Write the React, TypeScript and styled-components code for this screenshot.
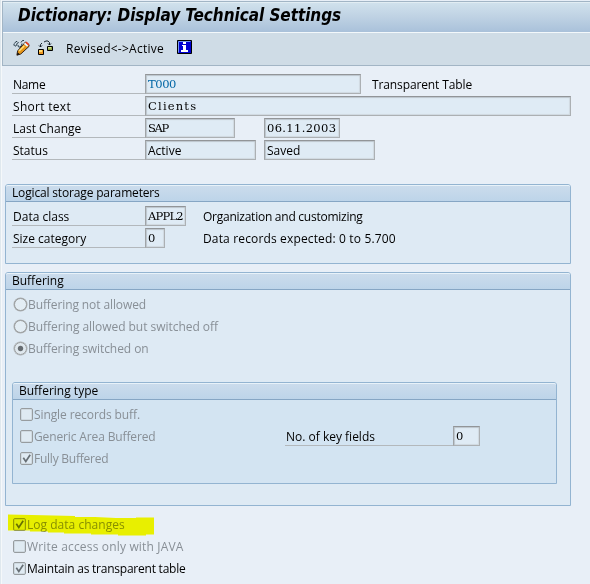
import React from 'react';
import styled, { createGlobalStyle } from 'styled-components';

const Global = createGlobalStyle`
  * { box-sizing: border-box; }
  body { margin: 0; background: #e8eff7; overflow: hidden; }
`;

const Page = styled.div`
  position: relative;
  width: 590px;
  height: 584px;
  padding: 1px 0 0 2px;
  background: #e8eff7;
  color: #000;
  font: 12px/20px "Open Sans", sans-serif;
  white-space: nowrap;
  box-shadow: inset 1px 0 #dfe8ee, inset 2px 0 #f5f8fa;
`;

const Header = styled.header`
  height: 65px;
  border: solid #a2b5c5;
  border-width: 1px 0 1px 1px;
  background: #cfdce6;
`;

const TitleBar = styled.div`
  height: 31px;
  padding: 0 0 0 15px;
  border-top: 1px solid #e2edf3;
  border-bottom: 1px solid #f3f8fb;
  background: linear-gradient(#d0e1ec, #bed1e3 50%, #a9c1da);
`;

const Title = styled.h1`
  margin: 0;
  font: oblique bold 17px/24px "DejaVu Sans Condensed", "DejaVu Sans", sans-serif;
  font-stretch: condensed;
  letter-spacing: -0.06px;
`;

const Toolbar = styled.div`
  display: flex;
  align-items: flex-start;
  padding: 7px 0 0 10px;
  height: 32px;
`;

const PencilIcon = styled.svg`
  width: 18px;
  height: 17px;
  margin-right: 6px;
`;

const SwitchIcon = styled.svg`
  width: 17px;
  height: 17px;
  margin-right: 12px;
`;

const InfoIcon = styled.svg`
  width: 15px;
  height: 14px;
  margin-left: 13px;
`;

const Text = styled.span<{ $track?: number }>`
  letter-spacing: ${p => p.$track ?? 0}px;
`;

const ToolText = styled(Text)`
  margin-top: -1px;
`;

const Form = styled.div`
  display: grid;
  gap: 2px;
  padding: 8px 0 0 10px;
`;

const Row = styled.div`
  display: flex;
  height: 20px;
`;

const Label = styled.div<{ $width?: number; $track?: number }>`
  width: ${p => p.$width ?? 133}px;
  height: 20px;
  padding-left: 1px;
  border-bottom: 1px solid #b3b8bc;
  line-height: 21px;
  letter-spacing: ${p => p.$track ?? 0}px;
`;

const Field = styled.div<{ $width: number; $gap?: number }>`
  width: ${p => p.$width}px;
  height: 20px;
  margin-left: ${p => p.$gap ?? 0}px;
  padding-left: 2px;
  border: 1px solid #acb0b3;
  border-top-color: #929598;
  border-left-color: #a0a4a7;
  background: #dfebf5;
  box-shadow: inset 1px 1px 1px #bcc5cc, inset -1px -1px 1px #d0d9e0;
  line-height: 19px;
`;

const CodeField = styled(Field)<{ $track?: number; $blue?: boolean; $indent?: number }>`
  padding-left: ${p => p.$indent ?? 2}px;
  color: ${p => (p.$blue ? '#0066a5' : '#000')};
  font: 11.5px/19px "DejaVu Serif", serif;
  letter-spacing: ${p => p.$track ?? 0}px;
`;

const Note = styled.div<{ $gap: number; $track?: number }>`
  margin-left: ${p => p.$gap}px;
  line-height: 21px;
  letter-spacing: ${p => p.$track ?? 0}px;
`;

const Group = styled.section<{ $height: number; $top: number }>`
  width: 566px;
  height: ${p => p.$height}px;
  margin: ${p => p.$top}px 0 0 3px;
  border: 1px solid #93b4d1;
  border-radius: 3px 3px 0 0;
  background: #deeaf4;
`;

const InnerGroup = styled(Group)`
  width: 545px;
  margin-left: 6px;
  background: #d3e4f2;
`;

const GroupTitle = styled.h2<{ $track?: number }>`
  height: 17px;
  margin: 0;
  padding-left: 6px;
  border-top: 1px solid #e8f2f9;
  border-bottom: 1px solid #86a6c4;
  border-radius: 2px 2px 0 0;
  background: linear-gradient(#cbdcec, #bdd4e9);
  font: inherit;
  line-height: 14px;
  letter-spacing: ${p => p.$track ?? 0}px;
`;

const GroupRows = styled.div`
  display: grid;
  gap: 2px;
  padding: 4px 0 0 6px;
`;

const RadioRows = styled.div`
  padding: 4px 0 0 8px;
`;

const CheckColumns = styled.div`
  display: flex;
  padding: 4px 0 0 7px;
`;

const CheckColumn = styled.div`
  width: 265px;
`;

const KeyFields = styled.div`
  display: flex;
  padding-top: 22px;
`;

const Option = styled.div<{ $disabled?: boolean; $track?: number }>`
  display: flex;
  align-items: center;
  gap: 1px;
  height: 22px;
  color: ${p => (p.$disabled ? '#888f96' : '#000')};
  letter-spacing: ${p => p.$track ?? 0}px;
`;

const Radio = styled.i<{ $on?: boolean }>`
  width: 13px;
  height: 13px;
  margin-bottom: 2px;
  border: 1.5px solid #9b9e9f;
  border-radius: 50%;
  background: ${p => (p.$on ? 'radial-gradient(circle, #666c71 2.2px, #dfe8ee 3.2px)' : '#e3edf4')};
  box-shadow: 0 0 0 0.5px #a9adaf;
`;

const Box = styled.i`
  display: grid;
  place-items: center;
  width: 13px;
  height: 13px;
  margin-bottom: 2px;
  border: 1px solid #979c9f;
  border-radius: 2px;
  background: #dfeaf2;
  box-shadow: inset 0 0 0 1px #d0dae1;
`;

const CheckSvg = styled.svg`
  width: 11px;
  height: 11px;
`;

const Footer = styled.div`
  padding: 8px 0 0 11px;
`;

const Marker = styled.svg`
  position: absolute;
  left: 8px;
  top: 513px;
  width: 147px;
  height: 24px;
  mix-blend-mode: multiply;
`;

function Check({ on, track, disabled = true, children }: { on?: boolean; track?: number; disabled?: boolean; children: string }) {
  return (
    <Option $disabled={disabled} $track={track}>
      <Box>
        {on && (
          <CheckSvg viewBox="0 0 11 11">
            <path d="M2.3 4.8 4.8 8.4 9.2 1.8" fill="none" stroke="#676f75" strokeWidth="1.7" />
          </CheckSvg>
        )}
      </Box>
      <span>{children}</span>
    </Option>
  );
}

export default function App() {
  return (
    <Page>
      <Global />
      <Header>
        <TitleBar><Title>Dictionary: Display Technical Settings</Title></TitleBar>
        <Toolbar>
          <PencilIcon viewBox="0 0 18 17">
            <path d="M1.5 3.5 3 1.5h1.2M1 3.8v1.4l1 1 1.5-.8.7-2.2 1.5-.7M5 5l.3 1.7 1.7.5 1.6-2L9 3.5M8 2.5l1.5-2h1.5" fill="none" stroke="#263b47" />
            <path d="M12.5 2 16 4.7v1.7L7.8 14l-3.9 1.2.7-4.3z" fill="#e59517" stroke="#3b271a" />
            <path d="m11.6 3.2 3.1 2.9" stroke="#e8f6ff" strokeWidth="2" />
            <path d="m13 2.2 2.8 2.6" stroke="#e63922" strokeWidth="1.6" />
            <path d="m6 11 5.2-5" stroke="#ffe177" strokeWidth="1.5" />
            <path d="m4.5 12.2-.5 3 2.9-.9z" fill="#111" />
          </PencilIcon>
          <SwitchIcon viewBox="0 0 17 17">
            <path d="M3.5 7V4.5L5 3m2-1 2-1h2l1.5 1.5V5M2 5.5 3.5 7 5 5.5M11 3.5 12.5 5 14 3.5" fill="none" stroke="#17232b" />
            <path d="M1.5 9.5h5v5h-5z" fill="#ed9622" stroke="#000" />
            <path d="M2 10h3v2H2z" fill="#ffdc72" />
            <path d="M10.5 6.5h5v4h-5z" fill="#94a944" stroke="#000" />
            <path d="M11 7h3v1.5h-3z" fill="#d6e28b" />
          </SwitchIcon>
          <ToolText $track={0.25}>{'Revised<->Active'}</ToolText>
          <InfoIcon viewBox="0 0 15 14">
            <path d="M.5.5h14v13H.5z" fill="#0000d2" stroke="#000" />
            <path d="M1.5 12.5v-11h12" fill="none" stroke="#7898f0" />
            <path d="M6 2h3v2H6zM5 5h4v5h2v2H4v-2h2V6H5z" fill="#fff" />
          </InfoIcon>
        </Toolbar>
      </Header>

      <Form>
        <Row>
          <Label $track={-0.3}>Name</Label>
          <CodeField $width={216} $blue $track={-0.4}>T000</CodeField>
          <Note $gap={11} $track={-0.12}>Transparent Table</Note>
        </Row>
        <Row>
          <Label $track={0.3}>Short text</Label>
          <CodeField $width={426} $track={1.2}>Clients</CodeField>
        </Row>
        <Row>
          <Label>Last Change</Label>
          <CodeField $width={90} $track={-1.3}>SAP</CodeField>
          <CodeField $width={76} $gap={29} $track={0.35}>06.11.2003</CodeField>
        </Row>
        <Row>
          <Label>Status</Label>
          <Field $width={111}>Active</Field>
          <Field $width={111} $gap={8}>Saved</Field>
        </Row>
      </Form>

      <Group $height={80} $top={24}>
        <GroupTitle $track={-0.16}>Logical storage parameters</GroupTitle>
        <GroupRows>
          <Row>
            <Label>Data class</Label>
            <CodeField $width={41} $track={-0.8}>APPL2</CodeField>
            <Note $gap={17} $track={-0.25}>Organization and customizing</Note>
          </Row>
          <Row>
            <Label>Size category</Label>
            <CodeField $width={20}>0</CodeField>
            <Note $gap={38} $track={0.15}>Data records expected: 0 to 5.700</Note>
          </Row>
        </GroupRows>
      </Group>

      <Group $height={234} $top={8}>
        <GroupTitle>Buffering</GroupTitle>
        <RadioRows>
          <Option $disabled $track={-0.1}><Radio /><span>Buffering not allowed</span></Option>
          <Option $disabled $track={-0.04}><Radio /><span>Buffering allowed but switched off</span></Option>
          <Option $disabled $track={-0.07}><Radio $on /><span>Buffering switched on</span></Option>
        </RadioRows>
        <InnerGroup $height={102} $top={22}>
          <GroupTitle>Buffering type</GroupTitle>
          <CheckColumns>
            <CheckColumn>
              <Check track={-0.1}>Single records buff.</Check>
              <Check track={-0.13}>Generic Area Buffered</Check>
              <Check on track={-0.24}>Fully Buffered</Check>
            </CheckColumn>
            <KeyFields>
              <Label $width={168}>No. of key fields</Label>
              <CodeField $width={27}>0</CodeField>
            </KeyFields>
          </CheckColumns>
        </InnerGroup>
      </Group>

      <Footer>
        <Check on track={0.03}>Log data changes</Check>
        <Check track={0.17}>Write access only with JAVA</Check>
        <Check on disabled={false} track={-0.23}>Maintain as transparent table</Check>
      </Footer>

      <Marker viewBox="0 0 147 24">
        <path d="M0 1.5 24 2l43 1v1h20l21 1h20V4.5h18v17h-8v1h-28v-1H83v-1H56v-1H40v-1H22v-1H0z" fill="#ffff00" />
      </Marker>
    </Page>
  );
}
